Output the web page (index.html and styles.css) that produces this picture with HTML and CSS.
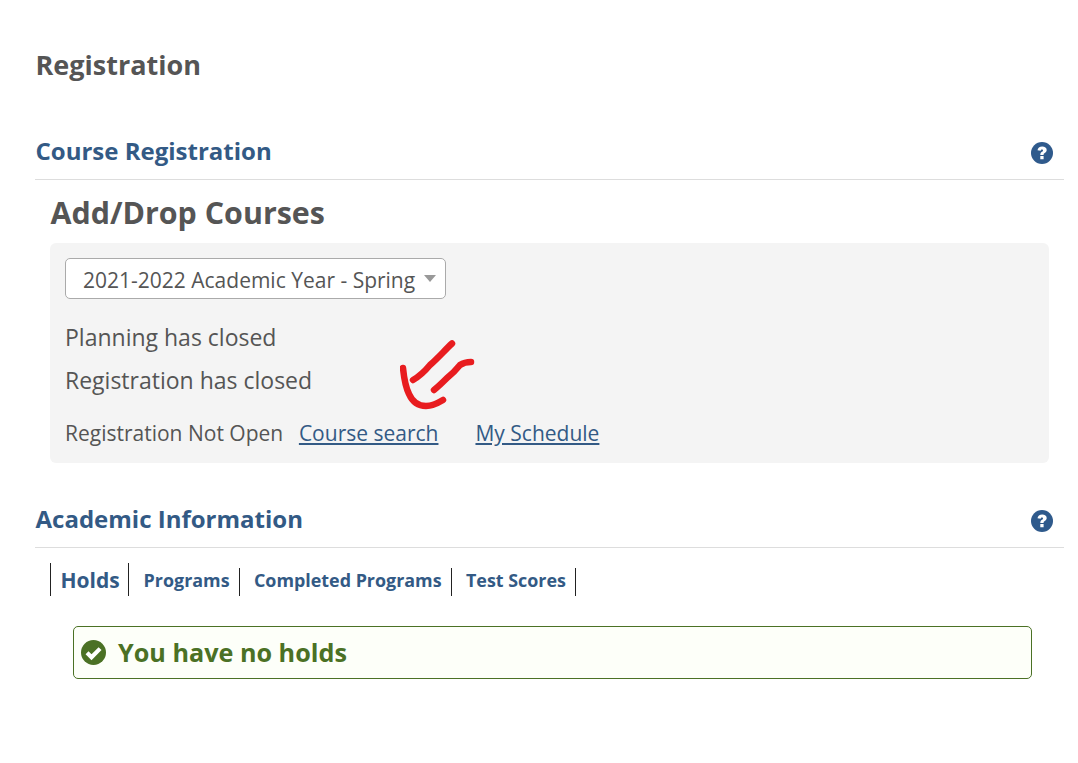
FILE: index.html
```html
<!DOCTYPE html>
<html lang="en">
<head>
<meta charset="utf-8">
<title>Registration</title>
<link rel="stylesheet" href="styles.css">
</head>
<body>
<main class="page">
  <h1 class="page-title">Registration</h1>

  <section class="section section-course">
    <header class="section-head">
      <h2 class="section-title">Course Registration</h2>
      <svg class="help" viewBox="0 0 22 22" aria-hidden="true"><circle cx="11" cy="11" r="11" fill="#2f5a8c"/><path d="M6.500 8.300c.3-2.400 2.100-3.800 4.700-3.800 2.600 0 4.500 1.400 4.500 3.600 0 1.500-.9 2.300-2 3-.9.600-1.100 1-1.100 1.900H9.300c0-1.700.5-2.500 1.700-3.300.8-.5 1-.8 1-1.300s-.4-.9-1-.9c-.7 0-1.200.5-1.300 1.200zM9.300 14h3.300v3.300H9.300z" fill="#fff"/></svg>
    </header>
    <div class="section-body">
      <h3 class="sub-title">Add/Drop Courses</h3>
      <div class="panel">
        <div class="select"><span>2021-2022 Academic Year - Spring</span><i class="caret"></i></div>
        <p class="status status-first">Planning has closed</p>
        <p class="status">Registration has closed</p>
        <div class="links">
          <span>Registration Not Open</span>
          <a href="#" class="link-search">Course search</a>
          <a href="#" class="link-schedule">My Schedule</a>
        </div>
        <svg class="scribble" viewBox="0 0 80 72" aria-hidden="true">
          <path d="M52 3.500C45 10 38 18 30 25 25 31 20 36 13 40M71 22C66 22 63 23 60 25 56 30 52 34 47 38 43 42 39 46 34 50M3 28C4 38 6 48 9 54 13 63 20 66 26 66 32 66 38 63 43 60"/>
        </svg>
      </div>
    </div>
  </section>

  <section class="section section-academic">
    <header class="section-head">
      <h2 class="section-title">Academic Information</h2>
      <svg class="help" viewBox="0 0 22 22" aria-hidden="true"><circle cx="11" cy="11" r="11" fill="#2f5a8c"/><path d="M6.500 8.300c.3-2.400 2.100-3.800 4.700-3.800 2.600 0 4.500 1.400 4.500 3.600 0 1.500-.9 2.300-2 3-.9.600-1.100 1-1.100 1.900H9.300c0-1.700.5-2.500 1.700-3.300.8-.5 1-.8 1-1.300s-.4-.9-1-.9c-.7 0-1.200.5-1.300 1.200zM9.300 14h3.300v3.300H9.300z" fill="#fff"/></svg>
    </header>
    <nav class="tabs">
      <a href="#" class="tab tab-active">Holds</a>
      <a href="#" class="tab">Programs</a>
      <a href="#" class="tab">Completed Programs</a>
      <a href="#" class="tab">Test Scores</a>
    </nav>
    <div class="notice">
      <svg class="check" viewBox="0 0 24 24" aria-hidden="true"><circle cx="12" cy="12" r="12" fill="#4b7125"/><path d="M5.800 12.200l4.300 4.300 8.200-8.200" fill="none" stroke="#fff" stroke-width="4"/></svg>
      <span class="notice-text">You have no holds</span>
    </div>
  </section>
</main>
</body>
</html>
```
FILE: styles.css
```css
* { box-sizing: border-box; }
html, body { margin: 0; background: #fff; }
body { font-family: "Open Sans", "Liberation Sans", sans-serif; color: #555; height: 763px; overflow: hidden; }
.page { padding: 0 14px 0 35px; }
.page-title { margin: 0; padding: 46px 0 0 0.5px; font-size: 27px; line-height: 38px; font-weight: 700; color: #555; }
.section-course { margin-top: 46px; }
.section-academic { margin-top: 35px; }
.section-head { display: flex; justify-content: space-between; align-items: center; height: 50px; border-bottom: 1px solid #ddd; padding: 0 11px 4px 0.5px; }
.section-title { margin: 0 0 4px; font-size: 24px; line-height: 32px; font-weight: 700; color: #335a85; }
.help { width: 22px; height: 22px; display: block; }
.section-body { padding: 0 15px; }
.sub-title { margin: 14px 0 11px; padding-left: 0.5px; font-size: 30.4px; line-height: 38px; font-weight: 700; color: #555; }
.panel { position: relative; background: #f4f4f4; border-radius: 6px; padding: 15px; height: 220px; }
.select { display: flex; align-items: center; justify-content: space-between; width: 381px; height: 41px; background: #fff; border: 1px solid #aaa; border-radius: 5px; padding: 2px 9px 0 17px; font-size: 21px; color: #555; white-space: nowrap; }
.caret { border: 6px solid transparent; border-top: 7px solid #999; border-bottom: 0; margin-bottom: 2px; }
.status { margin: 0; font-size: 23px; line-height: 32px; }
.status-first { margin-top: 22px; }
.status + .status { margin-top: 11px; }
.links { display: flex; margin-top: 23px; font-size: 21px; line-height: 28px; }
.links a { color: #335a85; text-decoration: underline; }
.link-search { margin-left: 15.700px; }
.link-schedule { margin-left: 37px; }
.scribble { position: absolute; left: 350px; top: 97px; width: 80px; height: 72px; fill: none; stroke: #e81c1f; stroke-width: 6.500; stroke-linecap: round; stroke-linejoin: round; }
.tabs { display: flex; align-items: flex-start; margin: 15px 0 0 15px; height: 33px; }
.tab { display: block; border-right: 1px solid #222; padding: 0 9px 0 14.400px; height: 28px; margin-top: 5px; font-size: 17.9px; line-height: 25px; font-weight: 700; color: #335a85; text-decoration: none; }
.tab-active { border-left: 1px solid #222; height: 33px; margin-top: 0; padding: 0 8.500px 0 9.500px; font-size: 21px; line-height: 35px; }
.notice { display: flex; align-items: center; gap: 12px; margin: 30px 32px 0 38px; height: 53px; background: #fdfff9; border: 1px solid #4b7125; border-radius: 5px; padding: 0 7px; font-size: 25.2px; font-weight: 700; color: #4b7125; }
.notice-text { margin-bottom: 2px; }
.check { width: 25px; height: 25px; display: block; }
```
